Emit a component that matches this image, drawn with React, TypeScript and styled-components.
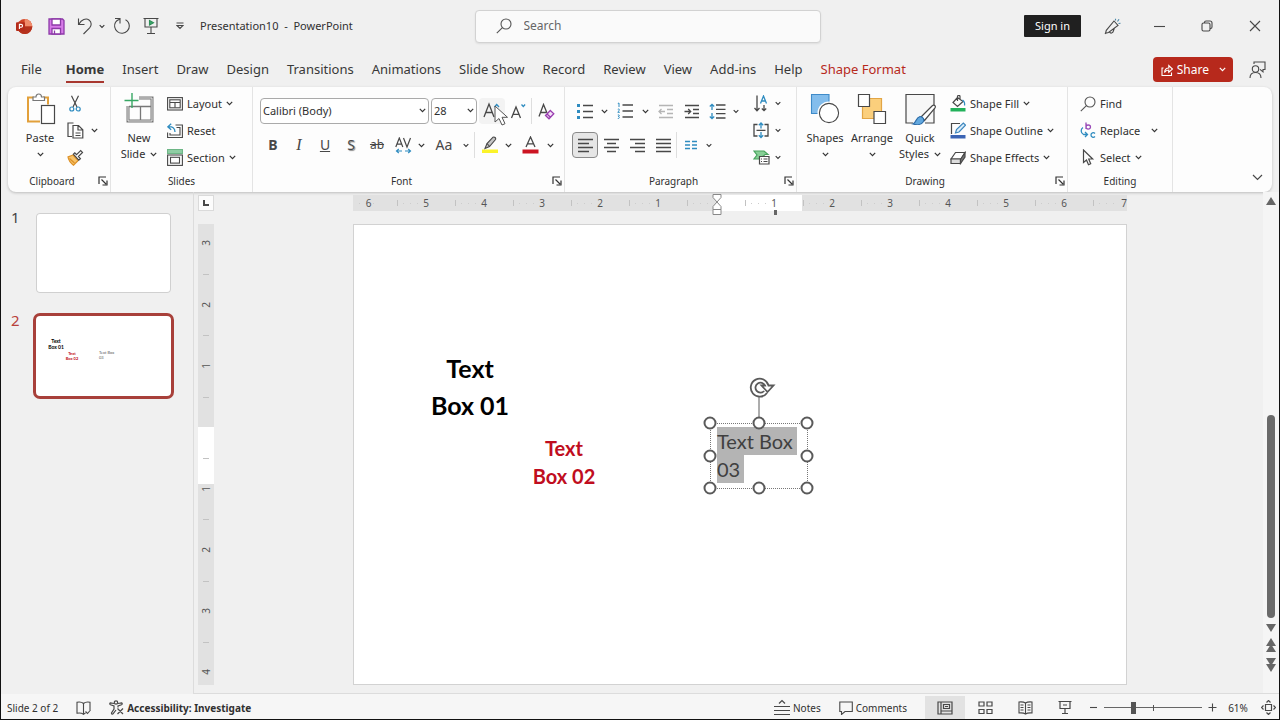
import React from "react";
import styled, { createGlobalStyle } from "styled-components";

const GlobalStyle = createGlobalStyle`
  * { box-sizing: border-box; }
  body { margin: 0; background: #f0f0f0; }
  button, input, select { font: inherit; color: inherit; }
  button { cursor: default; }
`;

const ink = "#484848";
const blue = "#2f8cc0";
const red = "#b7291c";

/* ---------- shell ---------- */

const Window = styled.div`
  display: flex;
  flex-direction: column;
  min-height: 100vh;
  border: 1px solid #111;
  border-top: 0;
  background: #f0f0f0;
  color: #303030;
  font-family: "Noto Sans", "Open Sans", sans-serif;
  font-size: 11px;
  line-height: 16px;
`;

const TitleBar = styled.header`
  display: flex;
  align-items: center;
  height: 52px;
  padding-left: 15px;
`;

const TitleSide = styled.div<{ $end?: boolean }>`
  display: flex;
  flex: 1 1 0;
  align-items: center;
  justify-content: ${(p) => (p.$end ? "flex-end" : "flex-start")};
  white-space: nowrap;
`;

const Logo = styled.span`
  display: flex;
  width: 24px;
`;

const IconButton = styled.button<{ $w?: number; $h?: number; $on?: boolean; $hover?: boolean }>`
  position: relative;
  display: flex;
  flex: none;
  align-items: center;
  justify-content: center;
  width: ${(p) => p.$w ?? 26}px;
  height: ${(p) => p.$h ?? 26}px;
  padding: 0;
  border: 1px solid ${(p) => (p.$on ? "#8a8a8a" : "transparent")};
  border-radius: 4px;
  background: ${(p) => (p.$on ? "#e6e6e6" : p.$hover ? "#f3f3f3" : "transparent")};
`;

const DocTitle = styled.h1`
  margin: 0;
  padding-left: 4px;
  font-size: 11px;
  font-weight: 400;
  white-space: pre;
`;

const SearchBox = styled.label`
  display: flex;
  flex: 0 1 346px;
  align-items: center;
  gap: 12px;
  height: 33px;
  padding: 0 20px;
  border: 1px solid #d2d2d2;
  border-radius: 4px;
  background: #fafafa;
  box-shadow: 0 1px 2px #00000014;
`;

const SearchInput = styled.input`
  flex: 1;
  min-width: 0;
  padding: 0;
  border: 0;
  outline: 0;
  background: transparent;
  font-size: 12px;
  &::placeholder { color: #666; opacity: 1; }
`;

const SignIn = styled.button`
  height: 22px;
  margin-right: 8px;
  padding: 0 11px;
  border: 0;
  border-radius: 1px;
  background: #202020;
  color: #fff;
`;

/* ---------- tabs ---------- */

const TabBar = styled.nav`
  display: flex;
  align-items: center;
  height: 35px;
  padding: 0 12px 0 20px;
  white-space: nowrap;
`;

const TabList = styled.div`
  display: flex;
  flex: 1;
  gap: 18px;
`;

const Tab = styled.button<{ $active?: boolean; $accent?: boolean; $first?: boolean }>`
  height: 26px;
  padding: 0;
  margin-right: ${(p) => (p.$first ? "6px" : "0")};
  border: 0;
  border-bottom: 2px solid ${(p) => (p.$active ? "#a8372f" : "transparent")};
  background: none;
  color: ${(p) => (p.$accent ? red : "#383838")};
  font-size: 13px;
  font-weight: ${(p) => (p.$active ? 700 : 400)};
`;

const ShareButton = styled.button`
  display: flex;
  align-items: center;
  gap: 4px;
  height: 25px;
  margin-right: 14px;
  padding: 0 7px 0 8px;
  border: 0;
  border-radius: 4px;
  background: ${red};
  color: #fff;
  font-size: 12px;
  svg:last-child { margin-left: 6px; }
`;

/* ---------- ribbon ---------- */

const Ribbon = styled.section`
  display: flex;
  height: 105px;
  margin: 0 7px;
  border-radius: 8px;
  background: #fdfdfd;
  box-shadow: 0 1px 3px #00000038;
  white-space: nowrap;
`;

const Group = styled.div<{ $w: number }>`
  display: flex;
  flex: 0 0 ${(p) => p.$w}px;
  flex-direction: column;
  padding-top: 3px;
  border-right: 1px solid #e4e4e4;
`;

const GroupBody = styled.div<{ $pad?: number }>`
  display: flex;
  height: 81px;
  padding-left: ${(p) => p.$pad ?? 7}px;
`;

const GroupFooter = styled.div`
  display: flex;
  align-items: center;
  height: 20px;
  font-size: 10px;
`;

const GroupName = styled.span`
  flex: 1;
  text-align: center;
`;

const LargeButton = styled.button<{ $w?: number }>`
  display: flex;
  flex-direction: column;
  align-items: center;
  width: ${(p) => p.$w ?? 48}px;
  padding: 3px 0 0;
  border: 0;
  background: none;
  line-height: 16px;
  > svg:first-child { margin-bottom: 5px; }
`;

const LabelLine = styled.span`
  display: flex;
  align-items: center;
  gap: 5px;
  height: 16px;
`;

const Stack = styled.div<{ $gap?: number }>`
  display: flex;
  flex-direction: column;
  margin-left: ${(p) => p.$gap ?? 0}px;
`;

const SmallRow = styled.div`
  display: flex;
  align-items: center;
  height: 27px;
`;

const SmallButton = styled.button`
  display: flex;
  align-items: center;
  gap: 4px;
  height: 24px;
  padding: 0;
  border: 0;
  background: none;
`;

const Tools = styled.div`
  padding-top: 4px;
`;

const ToolRow = styled.div`
  display: flex;
  align-items: center;
  height: 34px;
`;

const Separator = styled.span<{ $space?: number }>`
  width: 1px;
  height: 26px;
  margin: 0 ${(p) => p.$space ?? 0}px;
  background: #dedede;
`;

const Combo = styled.span<{ $w: number }>`
  position: relative;
  display: flex;
  width: ${(p) => p.$w}px;
  height: 26px;
  margin-right: 2px;
  > svg {
    position: absolute;
    top: 10px;
    right: 3px;
    pointer-events: none;
  }
`;

const ComboSelect = styled.select`
  width: 100%;
  padding: 0 2px;
  border: 1px solid #aaa;
  border-radius: 4px;
  background: #fff;
  appearance: none;
`;

const Pointer = styled.span`
  position: absolute;
  top: 6px;
  left: 14px;
  z-index: 2;
  display: flex;
`;

const Letter = styled.span<{ $kind?: "b" | "i" | "u" | "s" | "x" }>`
  color: ${ink};
  font-size: ${(p) => (p.$kind === "x" ? "12px" : p.$kind === "i" ? "16px" : "14px")};
  font-family: ${(p) => (p.$kind === "i" ? '"Liberation Serif", serif' : "inherit")};
  font-weight: ${(p) => (p.$kind === "b" ? 700 : 400)};
  font-style: ${(p) => (p.$kind === "i" ? "italic" : "normal")};
  text-decoration: ${(p) => (p.$kind === "u" ? "underline" : p.$kind === "x" ? "line-through" : "none")};
  text-shadow: ${(p) => (p.$kind === "s" ? "1px 1px 1px #888" : "none")};
`;

const RibbonEnd = styled.div`
  display: flex;
  flex: 1;
  align-items: flex-end;
  justify-content: flex-end;
  padding: 0 2px 2px 0;
`;

/* ---------- workspace ---------- */

const Workspace = styled.main`
  display: flex;
  flex: 1;
`;

const SlidePane = styled.ol`
  display: flex;
  flex: 0 0 193px;
  flex-direction: column;
  gap: 17px;
  margin: 0;
  padding: 18px 0 0 10px;
  border-right: 1px solid #dcdcdc;
  list-style: none;
`;

const SlideItem = styled.li<{ $active?: boolean }>`
  display: flex;
  color: ${(p) => (p.$active ? "#b8403a" : "#444")};
  font-size: 15px;
  line-height: 14px;
`;

const SlideNumber = styled.span`
  width: 22px;
`;

const Thumb = styled.button<{ $active?: boolean }>`
  position: relative;
  width: 141px;
  height: 86px;
  padding: 0;
  border: 3px solid ${(p) => (p.$active ? "#a8403a" : "transparent")};
  border-radius: 7px;
  background: #fff padding-box;
  box-shadow: ${(p) => (p.$active ? "none" : "inset 0 0 0 1px #d0d0d0")};
`;

const SlideText = styled.div<{ $x: number; $y: number; $w: number; $size: number; $lh: number; $color?: string; $plain?: boolean }>`
  position: absolute;
  left: ${(p) => p.$x}px;
  top: ${(p) => p.$y}px;
  width: ${(p) => p.$w}px;
  color: ${(p) => p.$color ?? "#000"};
  font-family: Lato, sans-serif;
  font-size: ${(p) => p.$size}px;
  font-weight: ${(p) => (p.$plain ? 400 : 700)};
  line-height: ${(p) => p.$lh}px;
  text-align: ${(p) => (p.$plain ? "left" : "center")};
`;

const Editor = styled.section`
  display: grid;
  flex: 1;
  grid-template-columns: 16px minmax(0, 1fr);
  grid-template-rows: 16px auto;
  gap: 13px 0;
  padding: 3px 0 8px 4px;
  border-bottom: 1px solid #dcdcdc;
`;

const TabStop = styled.button`
  display: flex;
  align-items: center;
  justify-content: center;
  padding: 0;
  border: 1px solid #dadada;
  background: #fcfcfc;
`;

const Centered = styled.div`
  display: flex;
  justify-content: center;
  padding-left: 3px;
`;

const HRuler = styled.div`
  position: relative;
  display: flex;
  width: 774px;
  height: 16px;
  background: linear-gradient(to right, #e1e1e1 364px, #fff 364px, #fff 449px, #e1e1e1 449px);
  color: #555;
  font-size: 10px;
  line-height: 16px;
`;

const HCell = styled.span<{ $edge?: "start" | "end" }>`
  flex: ${(p) => (p.$edge === "start" ? "0 0 44px" : p.$edge === "end" ? "0 0 34px" : "1")};
  padding-right: ${(p) => (p.$edge === "start" ? "13px" : "0")};
  text-align: ${(p) => (p.$edge === "end" ? "right" : "center")};
  background:
    linear-gradient(#c2c2c2, #c2c2c2) 0 50% / ${(p) => (p.$edge === "start" ? "0" : "1px")} 6px no-repeat,
    repeating-linear-gradient(to right, transparent 0 6px, #cdcdcd 6px 7px) 0 50% / 22px 1px no-repeat;
`;

const Indent = styled.span`
  position: absolute;
  top: -1px;
  left: 359px;
  display: flex;
`;

const RightMark = styled.span`
  position: absolute;
  top: 15px;
  left: 421px;
  width: 3px;
  height: 5px;
  background: #666;
`;

const VRuler = styled.div`
  display: flex;
  flex-direction: column;
  height: 461px;
  background: linear-gradient(#e1e1e1 203px, #fff 203px, #fff 260px, #e1e1e1 260px);
  color: #555;
  font-size: 10px;
`;

const VCell = styled.span<{ $edge?: "start" | "end" }>`
  display: flex;
  flex: ${(p) => (p.$edge === "start" ? "0 0 50px" : p.$edge === "end" ? "0 0 43px" : "1")};
  align-items: center;
  justify-content: center;
  padding: ${(p) => (p.$edge === "start" ? "0 0 12px" : p.$edge === "end" ? "17px 0 0" : "0")};
  background: linear-gradient(#c2c2c2, #c2c2c2) 50% 0 / 6px ${(p) => (p.$edge === "start" ? "0" : "1px")} no-repeat;
  span { transform: rotate(-90deg); }
`;

const Slide = styled.article`
  position: relative;
  width: 774px;
  height: 461px;
  border: 1px solid #d2d2d2;
  background: #fff;
`;

const Selection = styled.div`
  position: absolute;
  left: 356px;
  top: 198px;
  width: 98px;
  height: 66px;
  padding: 3px 0 0 6px;
  border: 1px dotted #777;
  color: #404040;
  font-family: Lato, sans-serif;
  font-size: 20px;
  line-height: 28px;
`;

const Mark = styled.span`
  display: block;
  width: fit-content;
  padding-right: 4px;
  background: #b4b4b4;
`;

const Frame = styled.svg`
  position: absolute;
  left: -8px;
  top: -49px;
  overflow: visible;
`;

const ScrollBar = styled.aside`
  display: flex;
  flex: 0 0 16px;
  flex-direction: column;
  align-items: center;
  gap: 6px;
  padding: 5px 0 21px;
  border-bottom: 1px solid #dcdcdc;
  background: #f5f5f5;
`;

const ScrollButton = styled.button`
  display: flex;
  padding: 0;
  border: 0;
  background: none;
`;

const ScrollTrack = styled.div`
  display: flex;
  flex: 1;
  align-items: flex-end;
`;

const ScrollThumb = styled.div`
  width: 8px;
  height: 50%;
  border-radius: 4px;
  background: #6a6a6a;
`;

/* ---------- status bar ---------- */

const StatusBar = styled.footer`
  display: flex;
  align-items: center;
  height: 25px;
  padding: 2px 0 0 6px;
  background: #f6f6f6;
  font-size: 10px;
  white-space: nowrap;
`;

const StatusSide = styled.div<{ $end?: boolean }>`
  display: flex;
  flex: ${(p) => (p.$end ? "none" : "1")};
  align-items: center;
  gap: ${(p) => (p.$end ? "0" : "18px")};
`;

const StatusButton = styled.button<{ $space?: number; $strong?: boolean }>`
  display: flex;
  align-items: center;
  gap: 3px;
  margin-right: ${(p) => p.$space ?? 0}px;
  padding: 0;
  border: 0;
  background: none;
  font-weight: ${(p) => (p.$strong ? 700 : 400)};
`;

const ViewButton = styled.button<{ $on?: boolean }>`
  display: flex;
  align-items: center;
  justify-content: center;
  width: 40px;
  height: 23px;
  padding: 0;
  border: 0;
  background: ${(p) => (p.$on ? "#e2e2e2" : "transparent")};
`;

const ZoomSlider = styled.input`
  width: 98px;
  height: 14px;
  margin: 0 3px;
  appearance: none;
  background:
    linear-gradient(#555, #555) 50% 50% / 1px 6px no-repeat,
    linear-gradient(#666, #666) 0 50% / 100% 1px no-repeat;
  &::-webkit-slider-thumb {
    appearance: none;
    width: 5px;
    height: 12px;
    background: #555;
  }
`;

const ZoomValue = styled.output`
  width: 38px;
  text-align: center;
`;

/* ---------- icons ---------- */

type IconProps = { w?: number; h?: number; box?: string; children: React.ReactNode; stroke?: string; sw?: number };

const Icon = ({ w = 16, h = w, box, children, stroke = ink, sw = 1.1 }: IconProps) => (
  <svg width={w} height={h} viewBox={box ?? `0 0 ${w} ${h}`} fill="none" stroke={stroke} strokeWidth={sw} aria-hidden="true">
    {children}
  </svg>
);

const Chevron = ({ stroke = "#333" }: { stroke?: string }) => (
  <Icon w={7} h={5} stroke={stroke} sw={1.2}><path d="M.8 .9 3.5 3.6 6.2 .9" /></Icon>
);

const Launcher = () => (
  <IconButton $w={14} $h={16} aria-label="More options">
    <Icon w={10} sw={1.2} stroke="#333"><path d="M1 8V1h7M3.5 3.5 8 8M9 4.5V9H4.5" /></Icon>
  </IconButton>
);

const PowerPointLogo = () => (
  <svg width="17" height="17" viewBox="0 0 17 17" aria-hidden="true">
    <circle cx="8.7" cy="8.5" r="7.6" fill="#cf4326" />
    <path d="M8.7 .9a7.6 7.6 0 0 1 7.6 7.6H8.7Z" fill="#f08c6c" />
    <path d="M1.4 10.5a7.6 7.6 0 0 0 14.9-2H8.7Z" fill="#b5321d" />
    <rect x="0" y="4.3" width="9" height="8.6" rx="1" fill="#b52c1a" />
    <path d="M3.4 11V6.4h1.7a1.4 1.4 0 0 1 0 2.9H3.4" fill="none" stroke="#fff" strokeWidth="1.1" />
  </svg>
);

const SaveIcon = () => (
  <Icon w={17} stroke="#8d3aa8" sw={1.3}>
    <path d="M1 1h13.5L16 2.5V16H1Z" fill="#d77be8" />
    <path d="M4 1h8.5v6H4Z" fill="#fff" />
    <path d="M4 16v-5.5h8.5V16Z" fill="#fff" />
    <path d="M6.5 12.5V16" />
  </Icon>
);

const UndoIcon = () => (
  <Icon w={16} h={18}><path d="M1.5 1.5v6h6M1.8 7.2C4.5 2.6 9 .8 12 3c3 2.2 2.6 5.6 .6 7.8L6.5 17" /></Icon>
);

const RedoIcon = () => (
  <Icon w={18} h={18}><path d="M2 1.5h5v5M6.6 2.2C3 3.5 1.2 6.5 1.7 10c.6 3.7 4 6.5 7.8 6.2 3.8-.3 6.9-3.5 6.8-7.3-.1-2.7-1.5-5-3.8-6.2" /></Icon>
);

const PresentIcon = () => (
  <Icon w={16} h={18}>
    <path d="M.5 1.5h15M2 1.5v8.5h12V1.5M8 10v6M4 16.5h8" />
    <path d="m6.5 3.5 4 2.3-4 2.3Z" fill="#3aa86a" stroke="#2e8f58" />
  </Icon>
);

const CustomizeIcon = () => (
  <Icon w={8} h={8} sw={1.2}><path d="M.5 1h7M1 3.5 4 6.5l3-3Z" /></Icon>
);

const SearchIcon = () => (
  <Icon stroke="#555"><circle cx="10" cy="6" r="5" /><path d="M6.4 9.6 .8 15.2" /></Icon>
);

const MegaphoneIcon = () => (
  <Icon w={17} h={17}>
    <path d="M10 3 14 7.500 4.500 14.500l-3 .8.8-3ZM5.500 13.800c.8 2 3.500 1.500 3.800-.6l1-2.800M1 15.800l1.500-1.500" />
    <path d="M11.500 2.500V.8M13.500 3.500 15 1.200M14.500 5.500l2-.3" stroke="#4a87a8" />
  </Icon>
);

const ShareIcon = () => (
  <Icon w={12} h={12} stroke="#fff"><path d="M2.500 4H1v7.500h9.500V8.500M3.500 8.500c.3-3.200 2-4.500 4.300-4.500V1.500L11.400 5 7.800 8.300V6C6 6 4.500 7 3.500 8.500Z" /></Icon>
);

const PersonCommentIcon = () => (
  <Icon w={17} h={18}><circle cx="6.5" cy="8" r="3.2" /><path d="M1 17c0-3.600 2.500-5.500 5.500-5.500s5.500 1.900 5.500 5.500M5 3V1h11v7.500h-2v2.300L11 8.300" /></Icon>
);

const PasteIcon = () => (
  <Icon w={32} h={32} sw={1.2}>
    <path d="M10 4.500H4v24h12M19 4.500h5v7" stroke="#e2a03a" strokeWidth={2} />
    <path d="M9 7.500V4h3c0-4 5.500-4 5.500 0h3v3.500Z" fill="#fff" stroke="#777" />
    <rect x="17.500" y="12.500" width="13" height="18" fill="#fff" />
  </Icon>
);

const CutIcon = () => (
  <Icon w={12} h={17} sw={1.2}>
    <path d="M2.500 .8 8 12M9.500 .8 4 12" />
    <circle cx="2.800" cy="14" r="2" stroke={blue} /><circle cx="9.200" cy="14" r="2" stroke={blue} />
  </Icon>
);

const CopyIcon = () => (
  <Icon w={17} h={17} sw={1.2}>
    <path d="M5 14.500H1V1h5.500M6 3.500h5.500l4.300 4.300V16H6ZM11 3.500V8h4.800M8.500 11h5M8.500 13.500h5" />
  </Icon>
);

const PainterIcon = () => (
  <Icon w={17} h={17} sw={1.2}>
    <path d="M6 6 1 8c.5 3 2.500 6 5.500 8.200l4.700-4.700Z" fill="#f7c36a" stroke="#dd9127" />
    <path d="m4 11 3.500 3M2.500 9.500l5 4.500" stroke="#dd9127" />
    <path d="m6.300 5.200 5.500 6 1.600-1.500-2-2.200L15.500 3.400 13.700 1.500 9.500 5.600 7.800 3.800Z" fill="#fff" />
  </Icon>
);

const NewSlideIcon = () => (
  <Icon w={32} h={32}>
    <path d="M16 5h13v23H5V13" stroke="#777" strokeWidth={3} />
    <path d="M16 5h13v23H5V13" stroke="#fff" strokeWidth={0.8} />
    <path d="M6 13.500h22M17.500 13.500V27" stroke="#777" strokeWidth={1.300} />
    <path d="M9 0v15M1.500 7.500h14" stroke="#37a764" strokeWidth={1.400} />
  </Icon>
);

const Board = ({ children }: { children: React.ReactNode }) => (
  <Icon w={16} h={15}><rect x=".6" y="1.6" width="14.8" height="12.4" /><rect x="2.8" y="3.8" width="10.4" height="8" />{children}</Icon>
);

const LayoutIcon = () => <Board><path d="M3 6.500h10M8 6.500v5" /></Board>;

const ResetIcon = () => (
  <Icon w={16} h={16}>
    <path d="M8.500 2h6.900v12.500H.600V9.500M9.500 4.500h3.500V12H3v-2" />
    <path d="M4.200 .8.800 3.800l3.400 3M1 3.800c4.500-.5 7 1.500 7 5.200" stroke={blue} strokeWidth={1.300} />
  </Icon>
);

const SectionIcon = () => (
  <Icon w={16} h={17}>
    <path d="M.5 .5h15v4H.500Z" fill="#8fcda4" stroke="#6db686" />
    <rect x=".6" y="6" width="14.8" height="10.4" /><rect x="3.500" y="8.300" width="9" height="5.800" />
  </Icon>
);

const GrowIcon = () => (
  <Icon w={18} h={18} sw={1.3}><path d="M1 15 6 2l5 13M2.800 10.500h6.500" /><path d="m11.500 5 2.200-2.500L16 5" stroke={blue} /></Icon>
);

const ShrinkIcon = () => (
  <Icon w={16} h={16} sw={1.300}><path d="M1.500 15 6 4l4.500 11M3 11.300h6" /><path d="m11.500 1.500 1.800 2 1.800-2" stroke={blue} /></Icon>
);

const ClearIcon = () => (
  <Icon w={17} h={17} sw={1.300}>
    <path d="M1 13.500 5.500 1.500 9 10M2.500 9.500h5.500" />
    <path d="m12.300 7.500 3.500 3.300-4.800 5-3.500-3.300ZM9 11l3.500 3.300" fill="#f4e0f8" stroke="#9a3db0" />
  </Icon>
);

const SpacingIcon = () => (
  <Icon w={17} h={17} sw={1.200}>
    <path d="m.8 10 3.500-9 3.500 9M2 7.200h4.500M8.500 1l3.500 9 3.500-9" />
    <path d="M2 14h5M10 14h5M3.800 12 1.500 14l2.300 2M13.200 12l2.300 2-2.300 2" stroke={blue} />
  </Icon>
);

const HighlightIcon = () => (
  <Icon w={18} h={18}>
    <path d="M1 13.500h16v3.500H1Z" fill="#fbf32a" stroke="none" />
    <path d="M4 12.500 6 7.500 12 1.200c1.500-.8 3.200.8 2.500 2.300L8.500 10.500Z" fill="#c5c5c5" /><path d="m6 7.500 2.700 3" />
  </Icon>
);

const FontColorIcon = () => (
  <Icon w={17} h={18} sw={1.300}><path d="M.5 13.500h16V17.500H.500Z" fill="#cc1522" stroke="none" /><path d="M4 11 8.500 1 13 11M5.500 7.800h6" /></Icon>
);

const BulletsIcon = () => (
  <Icon w={16} h={17} sw={1.300}>
    <path d="M6 2.500h10M6 8.500h10M6 14.500h10" /><path d="M0 2.500h3M0 8.500h3M0 14.500h3" stroke={blue} strokeWidth={3} />
  </Icon>
);

const NumberingIcon = () => (
  <Icon w={16} h={18} sw={1.300}>
    <path d="M5.500 3h10.500M5.500 9h10.500M5.500 15h10.500" />
    <path d="M.8 1.500 2 1v4M.8 7.300c2-1 2 .7 0 3h2M.8 13c2.500-.5 1.500 1.500.5 1.500 1.500 0 1.500 2.200-.5 2" stroke={blue} strokeWidth={1} />
  </Icon>
);

const IndentIcon = ({ out }: { out?: boolean }) => (
  <Icon w={16} h={15} sw={1.300} stroke={out ? "#b5b5b5" : ink}>
    <path d="M1 1.500h14M9 5.500h6M9 9.500h6M1 13.500h14" />
    <path d={out ? "M1 7.500h6M3.500 5 1 7.500 3.500 10" : "M.5 7.500h6M4.200 5l2.500 2.500L4.200 10"} />
  </Icon>
);

const LineSpacingIcon = () => (
  <Icon w={17} h={17} sw={1.300}>
    <path d="M7 2h9.500M7 6.300h9.500M7 10.600h9.500M7 15h9.500" />
    <path d="M3 1.500v5.500M.8 3.500 3 1.300l2.200 2.200M3 10v5.500M.8 13.500 3 15.700l2.200-2.200" stroke={blue} />
  </Icon>
);

const alignPaths = {
  left: "M0 1.500h15M0 5.500h11M0 9.500h15M0 13.500h11",
  center: "M0 1.500h15M3 5.500h9M0 9.500h15M3 13.500h9",
  right: "M0 1.500h15M5 5.500h10M0 9.500h15M5 13.500h10",
  justify: "M0 1.500h15M0 5.500h15M0 9.500h15M0 13.500h15",
};
type Align = keyof typeof alignPaths;
const AlignIcon = ({ kind }: { kind: Align }) => <Icon w={15} sw={1.300}><path d={alignPaths[kind]} /></Icon>;

const ColumnsIcon = () => (
  <Icon w={14} h={10} stroke={blue} sw={1.300}><path d="M1 1.500h5M1 5h5M1 8.500h5M8 1.500h5M8 5h5M8 8.500h5" /></Icon>
);

const DirectionIcon = () => (
  <Icon w={16} h={17} sw={1.300}>
    <path d="M4 .5v15M1.500 13 4 15.700 6.500 13M11 10v5.700M8.800 13.500 11 15.700l2.200-2.200" />
    <path d="m7.500 8.500 3-7.500 3 7.500M8.500 6h4" stroke={blue} />
  </Icon>
);

const AlignTextIcon = () => (
  <Icon w={16} h={17} sw={1.300}>
    <path d="M4.500 2.500H1v11.500h3.500M11.500 2.500H15v11.500h-3.500M3.500 8.300h9" />
    <path d="M8 1v5.500M5.800 3.200 8 1l2.200 2.200M8 10v5.500M5.800 13.300 8 15.500l2.200-2.200" stroke={blue} />
  </Icon>
);

const SmartArtIcon = () => (
  <Icon w={17} h={15} sw={1.200}>
    <path d="M1 1h10l4 3.500H12l-5 4.500H1l3-4Z" fill="#88cf96" stroke="#48a35d" />
    <path d="M6.500 6.500H16v7.500H6.500Z" fill="#fff" /><path d="M8 9h1M10.500 9h4M8 11.500h1M10.500 11.500h4" />
  </Icon>
);

const ShapesIcon = () => (
  <Icon w={30} h={32}><path d="M1.500 1.500h17.500v19H1.500Z" fill="#83bdec" stroke="#3f8bc9" /><circle cx="19" cy="20" r="10" fill="#fff" stroke="#fff" strokeWidth={3} /><circle cx="19" cy="20" r="9.600" /></Icon>
);

const ArrangeIcon = () => (
  <Icon w={30} h={32} sw={1.200}>
    <path d="M5.500 5.500h19v20h-19Z" fill="#fbcf7c" stroke="#e2a545" />
    <path d="M1.500 1.500h11v12h-11ZM17 18.500h11.500v12H17Z" fill="#fff" />
  </Icon>
);

const QuickStylesIcon = () => (
  <Icon w={32} h={32} sw={1.200}>
    <path d="M9 30H2V1.500h28v28.500H21" fill="#f7f7f7" />
    <path d="m17 24 11.500-11.500c1.500-1.200 3.600.5 2.500 2.300L20.500 27.500Z" fill="#fff" />
    <path d="M9 31c3.500-1 2.500-6.500 7-7.500 3 .2 4.500 2.800 3.500 5-2 3.500-7 3.600-10.500 2.500Z" fill="#62a8de" stroke="#2c6ca8" />
  </Icon>
);

const FillIcon = () => (
  <Icon w={16} h={17} sw={1.200}>
    <path d="M.5 13h15v3.500H.500Z" fill="#22b15a" stroke="none" />
    <path d="M7.500 2.500 3 7.500l4.500 4 5.500-5ZM7.500 6V1.500c0-1.500 2.500-1.500 2.500 0V4" /><path d="M12.500 5c1.800 1.500 2.500 3.500 2 5.500" stroke={blue} />
  </Icon>
);

const OutlineIcon = () => (
  <Icon w={16} h={17} sw={1.200}>
    <path d="M.5 13h15v3.500H.5Z" fill="#3b64b4" stroke="none" />
    <path d="M10 1.500H1.500V12" /><path d="m5.500 11 1-3.500L13.300 1l2.200 2.200L9 10Z" fill="#d9ecfa" stroke="#3c86bd" />
  </Icon>
);

const EffectsIcon = () => (
  <Icon w={16} h={14} sw={1.200}>
    <path d="m1 8 4.500-6.500H15L11 8Z" fill="#fff" /><path d="M1 8v4.500h9.500V8Z" fill="#ddd" /><path d="m10.500 8.500 4.500-7V6l-4.500 6.500Z" fill="#777" />
  </Icon>
);

const ReplaceIcon = () => (
  <Icon w={16} h={17} sw={1.300}>
    <path d="M6 .5v6.500M6 5c0-2.700 4.500-2.700 4.500 0S6 7.700 6 5" stroke="#9a4bb8" />
    <path d="M15 11.500c-1.500-1.500-4-.8-4 1.500s2.500 3 4 1.500M3 5.500C.5 7 .5 11 3.500 12.500H7M5 10l2.500 2.500L5 15" stroke={blue} />
  </Icon>
);

const SelectIcon = () => (
  <Icon w={16} h={17} sw={1.200}><path d="M3.500 1v12.500L6.500 11l2 4.800 2.200-1L8.700 10h4Z" /></Icon>
);

const NotesIcon = () => <Icon w={16} h={17} sw={1.200}><path d="M0 7.500h16M0 11.500h16M0 15.500h16M5 4.500l3-3 3 3" /></Icon>;
const CommentIcon = () => <Icon w={14} h={14}><path d="M.8 1h12.500v9.500H6l-3.500 3v-3H.8Z" /></Icon>;
const BookIcon = () => <Icon w={15} h={14}><path d="M7.500 2.500C6 1 3 .9 1 1.200v11c2-.3 5 0 6.500 1V2.500C9 1 12 .9 14 1.200V9M7.500 13.200 9.500 12M9.500 10.500l2 2 3-3.500" /></Icon>;
const AccessibilityIcon = () => (
  <Icon w={15} h={15} sw={1.200}><circle cx="7" cy="2.500" r="1.700" /><path d="M5 3.500 1.500 2.800c-1.200.5-.7 1.700 0 2L5 6v3l-2.500 4c-.2 1.200 1 1.600 1.700.7L7 10M9 3.500l3.500-.7c1.200.5.7 1.700 0 2L9 6v1.500M8.500 8.500l5.500 5.500M14 8.500 8.500 14" /></Icon>
);
const NormalViewIcon = () => <Icon w={16} h={14} sw={1.200}><path d="M1 1h14v12H1ZM4 1v12M4 10h11M6.500 3.500h6v4h-6ZM8 5.500h3" /></Icon>;
const SorterIcon = () => <Icon w={15} h={14} sw={1.200}><path d="M1 1h5v4H1ZM9 1h5v4H9ZM1 8.500h5v4H1ZM9 8.500h5v4H9Z" /></Icon>;
const ReadingIcon = () => <Icon w={15} h={14}><path d="M7.500 2C6 1 3 .8 1 1v11c2-.2 5 0 6.500 1 1.500-1 4.500-1.200 6.500-1V1c-2-.2-5 0-6.500 1ZM7.500 2v11M2.500 4h3M2.500 6.500h3M2.500 9h3M9.500 4h3M9.500 6.500h3M9.500 9h3" /></Icon>;
const ShowIcon = () => <Icon w={14} h={15} sw={1.200}><path d="M.5 1.500h13M2 1.500v7h10v-7M7 8.500V13M4 13.500h6M5 5h4" /></Icon>;
const FitIcon = () => <Icon w={15} h={15} sw={1.200}><path d="M4.500 4.500h6v6h-6ZM5.500 2.500l2-2 2 2M5.500 12.500l2 2 2-2M2.500 5.500l-2 2 2 2M12.500 5.500l2 2-2 2" /></Icon>;

const Arrow = ({ d, h = 8, label }: { d: string; h?: number; label: string }) => (
  <ScrollButton aria-label={label}><svg width="10" height={h} fill="#666" aria-hidden="true"><path d={d} /></svg></ScrollButton>
);

const Drop = ({ w = 10, label }: { w?: number; label: string }) => (
  <IconButton $w={w} aria-label={label}><Chevron /></IconButton>
);

/* ---------- page ---------- */

const laterTabs = ["Insert", "Draw", "Design", "Transitions", "Animations", "Slide Show", "Record", "Review", "View", "Add-ins", "Help"];
const handles = [[0, 0], [49, 0], [97, 0], [0, 33], [97, 33], [0, 65], [49, 65], [97, 65]];

const Footer = ({ name, launcher = true }: { name: string; launcher?: boolean }) => (
  <GroupFooter><GroupName>{name}</GroupName>{launcher && <Launcher />}</GroupFooter>
);

export default function App() {
  return (
    <Window>
      <GlobalStyle />
      <TitleBar>
        <TitleSide>
          <Logo><PowerPointLogo /></Logo>
          <IconButton $w={32} aria-label="Save"><SaveIcon /></IconButton>
          <IconButton $w={26} aria-label="Undo"><UndoIcon /></IconButton>
          <Drop w={8} label="Undo history" />
          <IconButton $w={32} aria-label="Redo"><RedoIcon /></IconButton>
          <IconButton $w={26} aria-label="Present"><PresentIcon /></IconButton>
          <IconButton $w={32} aria-label="Customize toolbar"><CustomizeIcon /></IconButton>
          <DocTitle>{"Presentation10  -  PowerPoint"}</DocTitle>
        </TitleSide>
        <SearchBox>
          <SearchIcon />
          <SearchInput type="text" placeholder="Search" aria-label="Search" />
        </SearchBox>
        <TitleSide $end>
          <SignIn>Sign in</SignIn>
          <IconButton $w={46} aria-label="What's new"><MegaphoneIcon /></IconButton>
          <IconButton $w={48} aria-label="Minimize"><Icon w={11} h={11}><path d="M0 5.500h11" /></Icon></IconButton>
          <IconButton $w={48} aria-label="Restore"><Icon w={12}><rect x="1" y="3" width="8" height="8" rx="1.500" /><path d="M3.500 3V2.500C3.500 1.500 4 1 5 1h4c1.300 0 2 .7 2 2v4c0 1-.5 1.500-1.500 1.500H9" /></Icon></IconButton>
          <IconButton $w={48} aria-label="Close"><Icon w={12}><path d="m1 1 10 10M11 1 1 11" /></Icon></IconButton>
        </TitleSide>
      </TitleBar>

      <TabBar>
        <TabList>
          <Tab $first>File</Tab>
          <Tab $active>Home</Tab>
          {laterTabs.map((name) => <Tab key={name}>{name}</Tab>)}
          <Tab $accent>Shape Format</Tab>
        </TabList>
        <ShareButton><ShareIcon />Share<Chevron stroke="#fff" /></ShareButton>
        <IconButton $w={20} aria-label="Comments"><PersonCommentIcon /></IconButton>
      </TabBar>

      <Ribbon>
        <Group $w={103}>
          <GroupBody $pad={8}>
            <LargeButton><PasteIcon />Paste<LabelLine><Chevron /></LabelLine></LargeButton>
            <Stack>
              <SmallRow><IconButton $w={22} aria-label="Cut"><CutIcon /></IconButton></SmallRow>
              <SmallRow><IconButton $w={22} aria-label="Copy"><CopyIcon /></IconButton><Drop w={16} label="Copy options" /></SmallRow>
              <SmallRow><IconButton $w={22} aria-label="Format painter"><PainterIcon /></IconButton></SmallRow>
            </Stack>
          </GroupBody>
          <Footer name="Clipboard" />
        </Group>

        <Group $w={142}>
          <GroupBody $pad={4}>
            <LargeButton><NewSlideIcon />New<LabelLine>Slide<Chevron /></LabelLine></LargeButton>
            <Stack $gap={4}>
              <SmallRow><SmallButton><LayoutIcon />Layout<Chevron /></SmallButton></SmallRow>
              <SmallRow><SmallButton><ResetIcon />Reset</SmallButton></SmallRow>
              <SmallRow><SmallButton><SectionIcon />Section<Chevron /></SmallButton></SmallRow>
            </Stack>
          </GroupBody>
          <Footer name="Slides" launcher={false} />
        </Group>

        <Group $w={312}>
          <GroupBody>
            <Tools>
              <ToolRow>
                <Combo $w={169}><ComboSelect aria-label="Font"><option>Calibri (Body)</option></ComboSelect><Chevron /></Combo>
                <Combo $w={46}><ComboSelect aria-label="Font size"><option>28</option></ComboSelect><Chevron /></Combo>
                <IconButton $w={26} $hover aria-label="Increase font size">
                  <GrowIcon />
                  <Pointer><svg width="15" height="22" viewBox="0 0 15 22" fill="#fff" stroke="#555" aria-hidden="true"><path d="M1 1v16l4-3.500 3 6.500 3-1.300-3-6.400h5.500Z" /></svg></Pointer>
                </IconButton>
                <IconButton $w={26} aria-label="Decrease font size"><ShrinkIcon /></IconButton>
                <Separator />
                <IconButton $w={28} aria-label="Clear formatting"><ClearIcon /></IconButton>
              </ToolRow>
              <ToolRow>
                <IconButton aria-label="Bold"><Letter $kind="b">B</Letter></IconButton>
                <IconButton aria-label="Italic"><Letter $kind="i">I</Letter></IconButton>
                <IconButton aria-label="Underline"><Letter $kind="u">U</Letter></IconButton>
                <IconButton aria-label="Text shadow"><Letter $kind="s">S</Letter></IconButton>
                <IconButton aria-label="Strikethrough"><Letter $kind="x">ab</Letter></IconButton>
                <IconButton aria-label="Character spacing"><SpacingIcon /></IconButton>
                <Drop label="Spacing options" />
                <IconButton $w={36} aria-label="Change case"><Letter>Aa</Letter></IconButton>
                <Drop w={8} label="Case options" />
                <Separator $space={4} />
                <IconButton $w={22} aria-label="Highlight"><HighlightIcon /></IconButton>
                <Drop w={14} label="Highlight colors" />
                <IconButton $w={30} aria-label="Font color"><FontColorIcon /></IconButton>
                <Drop label="Font colors" />
              </ToolRow>
            </Tools>
          </GroupBody>
          <Footer name="Font" />
        </Group>

        <Group $w={232}>
          <GroupBody>
            <Tools>
              <ToolRow>
                <IconButton aria-label="Bullets"><BulletsIcon /></IconButton>
                <Drop w={12} label="Bullet styles" />
                <IconButton $w={30} aria-label="Numbering"><NumberingIcon /></IconButton>
                <Drop label="Numbering styles" />
                <IconButton $w={32} aria-label="Decrease indent"><IndentIcon out /></IconButton>
                <IconButton $w={20} aria-label="Increase indent"><IndentIcon /></IconButton>
                <IconButton $w={30} aria-label="Line spacing"><LineSpacingIcon /></IconButton>
                <Drop w={8} label="Line spacing options" />
              </ToolRow>
              <ToolRow>
                {(Object.keys(alignPaths) as Align[]).map((kind) => (
                  <IconButton key={kind} $on={kind === "left"} aria-label={`Align ${kind}`}><AlignIcon kind={kind} /></IconButton>
                ))}
                <Separator />
                <IconButton $w={28} aria-label="Columns"><ColumnsIcon /></IconButton>
                <Drop w={8} label="Column options" />
              </ToolRow>
            </Tools>
            <Stack $gap={8}>
              <SmallRow><IconButton aria-label="Text direction"><DirectionIcon /></IconButton><Drop w={8} label="Direction options" /></SmallRow>
              <SmallRow><IconButton aria-label="Align text"><AlignTextIcon /></IconButton><Drop w={8} label="Align text options" /></SmallRow>
              <SmallRow><IconButton aria-label="Convert to SmartArt"><SmartArtIcon /></IconButton><Drop w={8} label="SmartArt options" /></SmallRow>
            </Stack>
          </GroupBody>
          <Footer name="Paragraph" />
        </Group>

        <Group $w={271}>
          <GroupBody $pad={5}>
            <LargeButton $w={46}><ShapesIcon />Shapes<LabelLine><Chevron /></LabelLine></LargeButton>
            <LargeButton><ArrangeIcon />Arrange<LabelLine><Chevron /></LabelLine></LargeButton>
            <LargeButton><QuickStylesIcon />Quick<LabelLine>Styles<Chevron /></LabelLine></LargeButton>
            <Stack $gap={6}>
              <SmallRow><SmallButton><FillIcon />Shape Fill<Chevron /></SmallButton></SmallRow>
              <SmallRow><SmallButton><OutlineIcon />Shape Outline<Chevron /></SmallButton></SmallRow>
              <SmallRow><SmallButton><EffectsIcon />Shape Effects<Chevron /></SmallButton></SmallRow>
            </Stack>
          </GroupBody>
          <Footer name="Drawing" />
        </Group>

        <Group $w={105}>
          <GroupBody $pad={12}>
            <Stack>
              <SmallRow><SmallButton><SearchIcon />Find</SmallButton></SmallRow>
              <SmallRow><SmallButton><ReplaceIcon />Replace</SmallButton><Drop w={28} label="Replace options" /></SmallRow>
              <SmallRow><SmallButton><SelectIcon />Select<Chevron /></SmallButton></SmallRow>
            </Stack>
          </GroupBody>
          <Footer name="Editing" launcher={false} />
        </Group>
        <RibbonEnd>
          <IconButton aria-label="Collapse ribbon"><Icon w={11} h={7} sw={1.200}><path d="m1 1 4.500 4.500L10 1" /></Icon></IconButton>
        </RibbonEnd>
      </Ribbon>

      <Workspace>
        <SlidePane>
          <SlideItem><SlideNumber>1</SlideNumber><Thumb aria-label="Slide 1" /></SlideItem>
          <SlideItem $active>
            <SlideNumber>2</SlideNumber>
            <Thumb $active aria-label="Slide 2">
              <SlideText $x={5} $y={22} $w={30} $size={5} $lh={6}>Text<br />Box 01</SlideText>
              <SlideText $x={21} $y={35} $w={30} $size={4} $lh={5} $color="#c00d20">Text<br />Box 02</SlideText>
              <SlideText $x={63} $y={34} $w={30} $size={4} $lh={5} $color="#555" $plain>Text Box<br />03</SlideText>
            </Thumb>
          </SlideItem>
        </SlidePane>

        <Editor>
          <TabStop aria-label="Tab stop"><Icon w={6} h={6} sw={2}><path d="M1 0v5h5" /></Icon></TabStop>
          <Centered>
            <HRuler>
              <HCell $edge="start">6</HCell>
              {["5", "4", "3", "2", "1", "", "1", "2", "3", "4", "5", "6"].map((n, i) => <HCell key={i}>{n}</HCell>)}
              <HCell $edge="end">7</HCell>
              <Indent><svg width="10" height="22" fill="#fff" stroke="#888" aria-hidden="true"><path d="M1 .5h8v3L5 8 1 3.500ZM5 8l4 4.500v3H1v-3ZM1 15.500h8v5H1Z" /></svg></Indent>
              <RightMark />
            </HRuler>
          </Centered>
          <VRuler>
            <VCell $edge="start"><span>3</span></VCell>
            {["2", "1", "", "1", "2", "3"].map((n, i) => <VCell key={i}><span>{n}</span></VCell>)}
            <VCell $edge="end"><span>4</span></VCell>
          </VRuler>
          <Centered>
            <Slide>
              <SlideText $x={66} $y={125} $w={100} $size={25} $lh={37}>Text<br />Box 01</SlideText>
              <SlideText $x={160} $y={209} $w={100} $size={20} $lh={28} $color="#c00d20">Text<br />Box 02</SlideText>
              <Selection>
                <Mark>Text Box</Mark>
                <Mark>03</Mark>
                <Frame width="115" height="125" fill="#fff" stroke="#5a5a5a" strokeWidth="2" aria-hidden="true">
                  <path d="M56 22v27" strokeWidth="1" />
                  {handles.map(([x, y]) => <circle key={`${x}-${y}`} cx={x + 7} cy={y + 48} r="5.500" />)}
                  <path d="M64 18A9 9 0 1 1 65.500 10.500H70.500L64.500 17 58.500 10.500H62a5 5 0 1 0-.8 5.500" strokeWidth="1.800" />
                </Frame>
              </Selection>
            </Slide>
          </Centered>
        </Editor>

        <ScrollBar>
          <Arrow label="Scroll up" d="M0 8 5 0l5 8Z" />
          <ScrollTrack><ScrollThumb /></ScrollTrack>
          <Arrow label="Scroll down" d="M0 0h10L5 8Z" />
          <Arrow label="Previous slide" h={14} d="M0 8 5 0l5 8ZM0 14 5 6l5 8Z" />
          <Arrow label="Next slide" h={14} d="M0 0h10L5 8ZM0 6h10l-5 8Z" />
        </ScrollBar>
      </Workspace>

      <StatusBar>
        <StatusSide>
          <span>Slide 2 of 2</span>
          <StatusButton aria-label="Spelling"><BookIcon /></StatusButton>
          <StatusButton $strong><AccessibilityIcon />Accessibility: Investigate</StatusButton>
        </StatusSide>
        <StatusSide $end>
          <StatusButton $space={18}><NotesIcon />Notes</StatusButton>
          <StatusButton $space={18}><CommentIcon />Comments</StatusButton>
          <ViewButton $on aria-label="Normal view"><NormalViewIcon /></ViewButton>
          <ViewButton aria-label="Slide sorter"><SorterIcon /></ViewButton>
          <ViewButton aria-label="Reading view"><ReadingIcon /></ViewButton>
          <ViewButton aria-label="Slide show"><ShowIcon /></ViewButton>
          <IconButton $w={16} $h={22} aria-label="Zoom out"><Icon w={9} h={9}><path d="M1 4.500h7" /></Icon></IconButton>
          <ZoomSlider type="range" min={0} max={100} defaultValue={29} aria-label="Zoom" />
          <IconButton $w={14} $h={22} aria-label="Zoom in"><Icon w={9} h={9}><path d="M.5 4.500h8M4.500 .5v8" /></Icon></IconButton>
          <ZoomValue>61%</ZoomValue>
          <IconButton $w={22} $h={22} aria-label="Fit to window"><FitIcon /></IconButton>
        </StatusSide>
      </StatusBar>
    </Window>
  );
}
